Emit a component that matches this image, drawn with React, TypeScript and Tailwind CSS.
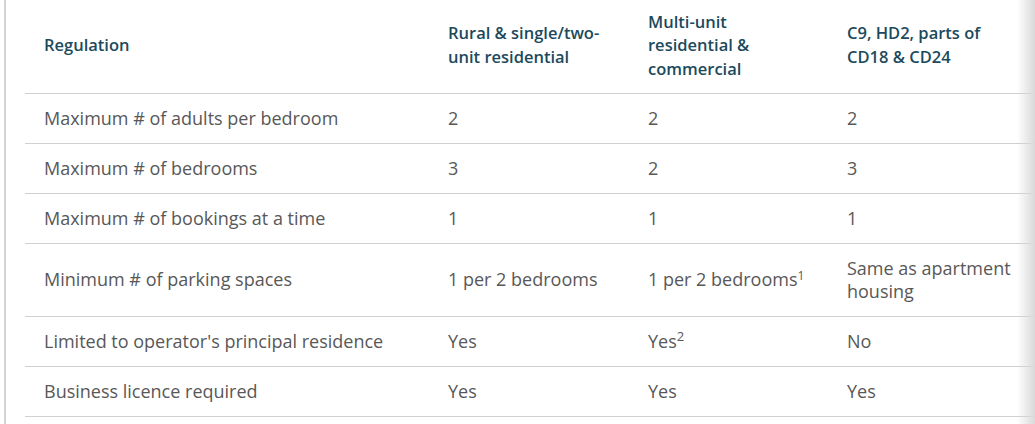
import React from "react";

const rows: { label: string; a: React.ReactNode; b: React.ReactNode; c: React.ReactNode; tall?: boolean }[] = [
  { label: "Maximum # of adults per bedroom", a: "2", b: "2", c: "2" },
  { label: "Maximum # of bedrooms", a: "3", b: "2", c: "3" },
  { label: "Maximum # of bookings at a time", a: "1", b: "1", c: "1" },
  {
    label: "Minimum # of parking spaces",
    a: "1 per 2 bedrooms",
    b: (
      <>
        1 per 2 bedrooms<sup className="text-[12px]">1</sup>
      </>
    ),
    c: "Same as apartment housing",
    tall: true,
  },
  {
    label: "Limited to operator's principal residence",
    a: "Yes",
    b: (
      <>
        Yes<sup className="text-[13px]">2</sup>
      </>
    ),
    c: "No",
  },
  { label: "Business licence required", a: "Yes", b: "Yes", c: "Yes" },
];

const headers = [
  { t: "Regulation", w: "" },
  { t: "Rural & single/two-unit residential", w: "w-[165px]" },
  { t: "Multi-unit residential & commercial", w: "w-[140px]" },
  { t: "C9, HD2, parts of CD18 & CD24", w: "w-[150px]" },
];

export default function App() {
  return (
    <div
      className="w-[1035px] h-[424px] bg-white overflow-hidden relative"
      style={{ fontFamily: '"Open Sans", "Noto Sans", sans-serif' }}
    >
      <div className="absolute left-[4px] top-0 bottom-0 w-[2px] bg-[#d4d4d4]" />
      <div className="pl-[25px]">
        <table className="w-[1040px] border-collapse table-fixed">
          <colgroup>
            <col className="w-[404px]" />
            <col className="w-[200px]" />
            <col className="w-[199px]" />
            <col className="w-[237px]" />
          </colgroup>
          <thead>
            <tr className="h-[93px] border-b border-[#d0d0d0]">
              {headers.map((h, i) => (
                <th
                  key={i}
                  className="text-left align-middle font-semibold text-[16.5px] leading-[23.5px] text-[#1c4a5c] pl-[19px] pr-[10px] pb-[3px]"
                >
                  <div className={h.w}>{h.t}</div>
                </th>
              ))}
            </tr>
          </thead>
          <tbody>
            {rows.map((r, i) => (
              <tr key={i} className={`border-b border-[#d0d0d0] ${r.tall ? "h-[73px]" : "h-[50px]"}`}>
                {[r.label, r.a, r.b, r.c].map((v, j) => (
                  <td
                    key={j}
                    className="align-middle text-[18px] leading-[23px] text-[#585858] pl-[19px] pr-[10px] py-[13px]"
                  >
                    {j === 3 ? <div className="w-[170px]">{v}</div> : v}
                  </td>
                ))}
              </tr>
            ))}
          </tbody>
        </table>
      </div>
      <div className="absolute right-0 top-0 bottom-0 w-[18px] bg-gradient-to-r from-white/0 to-[#d9d9d9]" />
    </div>
  );
}
